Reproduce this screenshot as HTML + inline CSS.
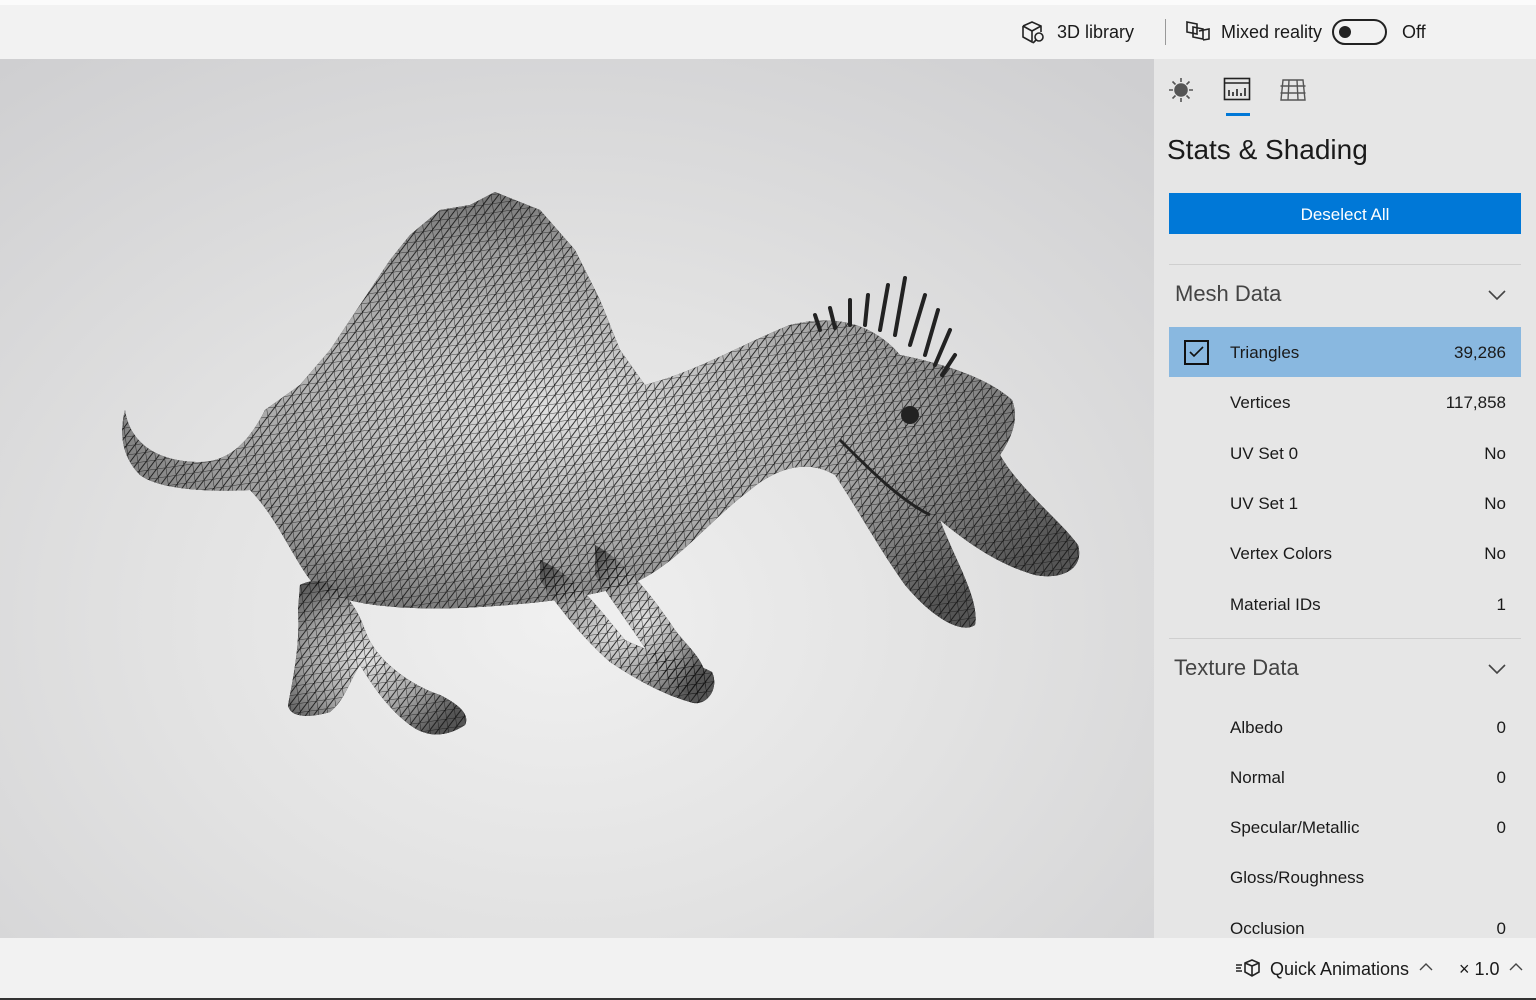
<!DOCTYPE html>
<html><head><meta charset="utf-8"><style>
*{margin:0;padding:0;box-sizing:border-box}
body{width:1536px;height:1000px;overflow:hidden;font-family:"Segoe UI","Liberation Sans",sans-serif;background:#f2f2f2;position:relative;color:#1a1a1a}
svg{display:block}
.top{position:absolute;left:0;top:0;width:1536px;height:59px;background:#f2f2f2;border-top:5px solid #fbfbfb}
.vp{position:absolute;left:0;top:59px;width:1154px;height:879px;background:radial-gradient(ellipse 900px 700px at 560px 560px,#f0f0f0 0%,#e2e2e2 45%,#cfcfd1 100%)}
.panel{position:absolute;left:1154px;top:59px;width:382px;height:879px;background:#e6e6e6}
.bot{position:absolute;left:0;top:938px;width:1536px;height:62px;background:#f2f2f2;border-bottom:2px solid #333}
.t{position:absolute;white-space:nowrap}
.row{position:absolute;left:1169px;width:352px;height:50px;font-size:17px;line-height:52px}
.row .l{position:absolute;left:61px}
.row .v{position:absolute;right:15px}
.sep{position:absolute;left:1169px;width:352px;height:1px;background:#cfcfcf}
</style></head><body>
<div class="top"></div>
<svg class="t" style="left:1020px;top:20px" width="28" height="26" viewBox="0 0 28 26" fill="none" stroke="#222" stroke-width="1.6"><path d="M3 6 L12 2 L21 6 L21 12 M3 6 L3 17 L12 22 L12 11 L3 6 M12 11 L21 6"/><circle cx="19" cy="17" r="4"/><path d="M16 20 L13 23"/></svg>
<div class="t" style="left:1057px;top:22px;font-size:18px">3D library</div>
<div class="t" style="left:1165px;top:19px;width:1px;height:26px;background:#999"></div>
<svg class="t" style="left:1185px;top:19px" width="28" height="24" viewBox="0 0 28 24" fill="none" stroke="#222" stroke-width="1.6"><path d="M2 3 L12 5 L12 15 L2 13 Z M8 8 L18 10 L18 20 L8 18 Z M14 12 L24 10 L24 20 L18 21"/></svg>
<div class="t" style="left:1221px;top:22px;font-size:18px">Mixed reality</div>
<div class="t" style="left:1332px;top:19px;width:55px;height:26px;border:2px solid #222;border-radius:13px"><div style="position:absolute;left:5px;top:5px;width:12px;height:12px;border-radius:6px;background:#222"></div></div>
<div class="t" style="left:1402px;top:22px;font-size:18px">Off</div>

<div class="vp"></div>
<svg class="t" style="left:0;top:0" width="1154" height="938">
<defs>
<pattern id="m" width="9" height="9" patternUnits="userSpaceOnUse" patternTransform="rotate(-8)">
<path d="M0 0 L9 0 M0 0 L0 9 M0 9 L9 0" stroke="#111" stroke-width="0.8" fill="none"/></pattern>
<radialGradient id="g" cx="0.45" cy="0.5" r="0.6"><stop offset="0" stop-color="#e0e0e0"/><stop offset="0.6" stop-color="#a0a0a0"/><stop offset="1" stop-color="#555"/></radialGradient>
</defs>
<g>
<path id="d" d="M125 410 C130 445 160 462 200 462 C230 462 250 440 265 410 L300 385 L330 350 L360 305 L390 260 L410 235 L440 210 L470 205 L495 192 L540 210 L575 250 L600 300 L620 350 L645 385 C700 370 740 345 790 325 C830 315 870 320 900 355 C950 365 990 380 1012 400 C1020 420 1010 440 1000 455 C1020 490 1060 520 1078 545 C1085 570 1060 580 1035 575 C1000 565 970 545 940 520 C955 560 980 600 975 625 C960 635 930 615 905 585 C880 550 855 505 835 475 C810 460 780 465 750 490 C710 520 680 560 640 580 C590 600 520 605 460 608 C400 610 350 605 320 590 C300 575 280 520 250 490 C210 492 160 490 140 475 C120 455 120 430 125 410 Z"/>
<path id="l1" d="M300 585 C330 570 355 600 365 630 C375 660 410 685 440 695 C460 705 470 715 465 725 C450 735 430 740 410 725 C390 710 375 690 360 665 C350 680 345 700 330 712 C310 718 290 718 288 705 C295 670 300 640 298 610 Z"/>
<path id="l2" d="M540 560 C575 575 600 610 625 640 C655 655 690 660 712 672 C720 690 705 708 690 702 C665 695 640 682 610 662 C585 640 560 610 540 580 Z"/>
<path id="l3" d="M595 545 C625 560 655 600 675 630 C690 650 712 665 705 692 C690 700 675 690 660 670 C640 640 615 605 595 575 Z"/>
</g>
<g fill="url(#g)"><use href="#d"/><use href="#l1"/><use href="#l2"/><use href="#l3"/></g>
<g fill="url(#m)"><use href="#d"/><use href="#l1"/><use href="#l2"/><use href="#l3"/></g>
<g stroke="#222" stroke-width="4" stroke-linecap="round" fill="none"><path d="M820 330 L815 315 M835 328 L830 308 M850 325 L850 300 M865 325 L868 295 M880 330 L888 285 M895 335 L905 278 M910 345 L925 295 M925 355 L938 310 M935 365 L950 330 M942 375 L955 355"/></g>
<circle cx="910" cy="415" r="9" fill="#222"/>
<path d="M840 440 C870 470 900 500 930 515" stroke="#222" stroke-width="3" fill="none"/>
</svg>

<div class="panel"></div>
<svg class="t" style="left:1167px;top:76px" width="28" height="28" viewBox="0 0 28 28" stroke="#555" stroke-width="1.6" fill="none"><circle cx="14" cy="14" r="6" fill="#555"/><path d="M14 2v4M14 22v4M2 14h4M22 14h4M5.5 5.5l3 3M19.5 19.5l3 3M5.5 22.5l3-3M19.5 8.5l3-3"/></svg>
<svg class="t" style="left:1223px;top:77px" width="28" height="24" viewBox="0 0 28 24" stroke="#222" stroke-width="1.6" fill="none"><rect x="1.5" y="1.5" width="25" height="21"/><path d="M1.5 6h25M6 19v-6M10 19v-4M14 19v-7M18 19v-3M22 19v-8"/></svg>
<div class="t" style="left:1226px;top:113px;width:24px;height:3px;background:#0078d7"></div>
<svg class="t" style="left:1279px;top:78px" width="28" height="24" viewBox="0 0 28 24" stroke="#555" stroke-width="1.4" fill="none"><path d="M4 2h20l2 20H2Z M1.5 8h25M1.5 15h25M10 2L9 22M18 2l1 20"/></svg>
<div class="t" style="left:1167px;top:134px;font-size:28px;color:#1a1a1a">Stats &amp; Shading</div>
<div class="t" style="left:1169px;top:193px;width:352px;height:41px;background:#0078d7;color:#fff;font-size:17px;line-height:43px;text-align:center">Deselect All</div>
<div class="sep" style="top:264px"></div>
<div class="t" style="left:1175px;top:281px;font-size:22px;color:#444">Mesh Data</div>
<svg class="t" style="left:1487px;top:289px" width="20" height="12" viewBox="0 0 20 12"><path d="M2 2l8 8 8-8" stroke="#444" stroke-width="1.6" fill="none"/></svg>
<div class="row" style="top:327px;background:#89b8e0"><div style="position:absolute;left:15px;top:13px;width:25px;height:25px;border:2px solid #111"><svg width="21" height="21" viewBox="0 0 21 21"><path d="M4 10l4 4 9-9" stroke="#111" stroke-width="1.6" fill="none"/></svg></div><span class="l">Triangles</span><span class="v">39,286</span></div>
<div class="row" style="top:377px"><span class="l">Vertices</span><span class="v">117,858</span></div>
<div class="row" style="top:428px"><span class="l">UV Set 0</span><span class="v">No</span></div>
<div class="row" style="top:478px"><span class="l">UV Set 1</span><span class="v">No</span></div>
<div class="row" style="top:528px"><span class="l">Vertex Colors</span><span class="v">No</span></div>
<div class="row" style="top:579px"><span class="l">Material IDs</span><span class="v">1</span></div>
<div class="sep" style="top:638px"></div>
<div class="t" style="left:1174px;top:655px;font-size:22px;color:#444">Texture Data</div>
<svg class="t" style="left:1487px;top:663px" width="20" height="12" viewBox="0 0 20 12"><path d="M2 2l8 8 8-8" stroke="#444" stroke-width="1.6" fill="none"/></svg>
<div class="row" style="top:702px"><span class="l">Albedo</span><span class="v">0</span></div>
<div class="row" style="top:752px"><span class="l">Normal</span><span class="v">0</span></div>
<div class="row" style="top:802px"><span class="l">Specular/Metallic</span><span class="v">0</span></div>
<div class="row" style="top:852px"><span class="l">Gloss/Roughness</span></div>
<div class="row" style="top:903px"><span class="l">Occlusion</span><span class="v">0</span></div>

<div class="bot"></div>
<svg class="t" style="left:1235px;top:958px" width="26" height="20" viewBox="0 0 26 20" stroke="#222" stroke-width="1.6" fill="none"><path d="M1 7h6M1 10h5M1 13h6M10 5l7-3 7 3v9l-7 4-7-4Z M10 5l7 3 7-3M17 8v10"/></svg>
<div class="t" style="left:1270px;top:959px;font-size:18px">Quick Animations</div>
<svg class="t" style="left:1418px;top:962px" width="16" height="10" viewBox="0 0 16 10"><path d="M2 8l6-6 6 6" stroke="#444" stroke-width="1.4" fill="none"/></svg>
<div class="t" style="left:1459px;top:959px;font-size:18px">× 1.0</div>
<svg class="t" style="left:1508px;top:962px" width="16" height="10" viewBox="0 0 16 10"><path d="M2 8l6-6 6 6" stroke="#444" stroke-width="1.4" fill="none"/></svg>
</body></html>
